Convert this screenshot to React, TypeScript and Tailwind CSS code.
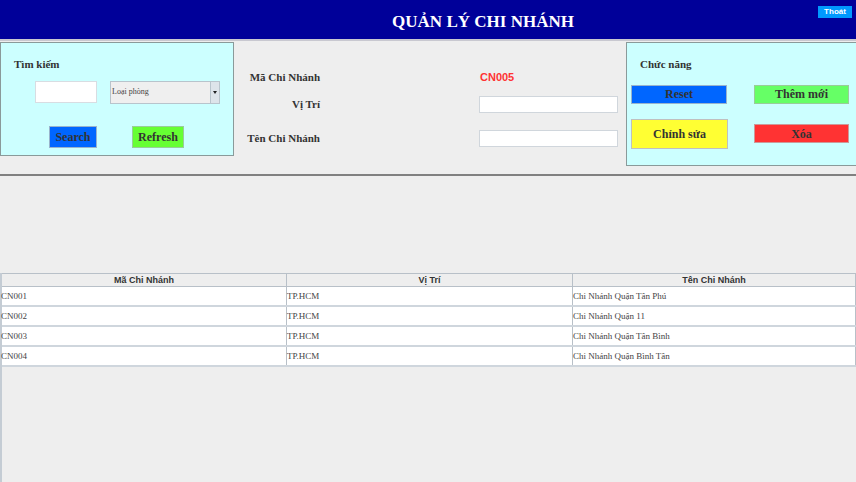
import React from "react";

const serif = { fontFamily: '"Liberation Serif", "Times New Roman", serif' };
const sans = { fontFamily: '"Liberation Sans", Arial, sans-serif' };

const rows = [
  ["CN001", "TP.HCM", "Chi Nhánh Quận Tân Phú"],
  ["CN002", "TP.HCM", "Chi Nhánh Quận 11"],
  ["CN003", "TP.HCM", "Chi Nhánh Quận Tân Bình"],
  ["CN004", "TP.HCM", "Chi Nhánh Quận Bình Tân"],
];

export default function App() {
  return (
    <div className="w-[856px] h-[482px] bg-[#eeeeee] flex flex-col overflow-hidden" style={serif}>
      {/* Header */}
      <div className="relative h-[39px] bg-[#000099] flex items-center justify-center pl-[110px] shrink-0">
        <span className="text-white font-bold text-[17px] pt-[5px]">QUẢN LÝ CHI NHÁNH</span>
        <button
          className="absolute top-[6px] right-[4px] w-[34px] h-[12px] bg-[#0099ff] text-white text-[8px] font-bold flex items-center justify-center"
          style={sans}
        >
          Thoát
        </button>
      </div>
      <div className="h-[2px] bg-[#c8c8d0] shrink-0" />

      {/* Top section */}
      <div className="h-[133px] flex items-start pt-[1px] shrink-0">
        {/* Search panel */}
        <div className="w-[234px] h-[114px] bg-[#ccffff] border border-[#8a9a9a] relative">
          <div className="pl-[13px] pt-[13px] text-[11px] font-bold text-[#333]">Tìm kiếm</div>
          <div className="flex items-center mt-[8px]">
            <div className="ml-[34px] w-[62px] h-[22px] bg-white border border-[#d8dde2]" />
            <div className="ml-[13px] w-[110px] h-[23px] bg-[#efefef] border border-[#b8c4cc] flex items-center">
              <span className="flex-1 pl-[1px] text-[8px] text-[#444]">Loại phòng</span>
              <div className="w-[9px] h-full bg-[#dde4ea] border-l border-[#b8c4cc] flex items-center justify-center">
                <div className="w-0 h-0 border-l-[2.5px] border-r-[2.5px] border-t-[3px] border-l-transparent border-r-transparent border-t-[#222]" />
              </div>
            </div>
          </div>
          <div className="flex mt-[22px]">
            <button className="ml-[48px] w-[48px] h-[22px] bg-[#0066ff] border border-[#99b3cc] text-[12px] font-bold text-[#333] flex items-center justify-center">
              Search
            </button>
            <button className="ml-[35px] w-[52px] h-[22px] bg-[#66ff33] border border-[#99cc99] text-[12px] font-bold text-[#333] flex items-center justify-center">
              Refresh
            </button>
          </div>
        </div>

        {/* Middle form */}
        <div className="w-[392px] h-[120px] relative text-[11px] font-bold text-[#333]">
          <div className="flex items-center h-[16px] mt-[27px]">
            <span className="w-[86px] text-right">Mã Chi Nhánh</span>
            <span className="ml-[160px] text-[11px] text-[#ff3333]" style={sans}>CN005</span>
          </div>
          <div className="flex items-center h-[17px] mt-[11px]">
            <span className="w-[86px] text-right">Vị Trí</span>
            <div className="ml-[159px] w-[139px] h-[17px] bg-white border border-[#d0d6dc]" />
          </div>
          <div className="flex items-center h-[17px] mt-[17px]">
            <span className="w-[86px] text-right">Tên Chi Nhánh</span>
            <div className="ml-[159px] w-[139px] h-[17px] bg-white border border-[#d0d6dc]" />
          </div>
        </div>

        {/* Function panel */}
        <div className="w-[230px] h-[124px] bg-[#ccffff] border border-[#8a9a9a] border-r-0">
          <div className="pl-[13px] pt-[13px] text-[11px] font-bold text-[#333]">Chức năng</div>
          <div className="flex mt-[12px] pl-[4px]">
            <button className="w-[96px] h-[19px] bg-[#0066ff] border border-[#99b3cc] text-[12px] font-bold text-[#333] flex items-center justify-center">
              Reset
            </button>
            <button className="ml-[27px] w-[95px] h-[19px] bg-[#66ff66] border border-[#99cc99] text-[12px] font-bold text-[#333] flex items-center justify-center">
              Thêm mới
            </button>
          </div>
          <div className="flex items-center mt-[15px] pl-[4px]">
            <button className="w-[97px] h-[30px] bg-[#ffff33] border border-[#c0c0c0] text-[12px] font-bold text-[#333] flex items-center justify-center">
              Chỉnh sửa
            </button>
            <button className="ml-[26px] w-[95px] h-[19px] bg-[#ff3333] border border-[#cc9999] text-[12px] font-bold text-[#333] flex items-center justify-center">
              Xóa
            </button>
          </div>
        </div>
      </div>

      {/* Separator */}
      <div className="h-[2px] bg-[#808080] shrink-0" />

      {/* Gap */}
      <div className="h-[97px] shrink-0" />

      {/* Table */}
      <div className="flex-1 border-l-2 border-[#c4ccd4] flex flex-col">
        <div className="grid grid-cols-[285px_286px_1fr] h-[14px] bg-[#eeeeee] border-t border-b border-[#b8c0c8] text-[9px] font-bold text-[#333]" style={sans}>
          <div className="flex items-center justify-center border-r border-[#b8c0c8]">Mã Chi Nhánh</div>
          <div className="flex items-center justify-center border-r border-[#b8c0c8]">Vị Trí</div>
          <div className="flex items-center justify-center border-r border-[#b8c0c8]">Tên Chi Nhánh</div>
        </div>
        {rows.map((r) => (
          <div key={r[0]} className="grid grid-cols-[285px_286px_1fr] h-[20px] bg-white border-b-2 border-[#cfd6dd] text-[9px] text-[#444]">
            <div className="flex items-center pt-[2px] border-r border-[#b8c0c8] -ml-[1px]">{r[0]}</div>
            <div className="flex items-center pt-[2px] border-r border-[#b8c0c8]">{r[1]}</div>
            <div className="flex items-center pt-[2px] border-r border-[#b8c0c8]">{r[2]}</div>
          </div>
        ))}
      </div>
    </div>
  );
}
